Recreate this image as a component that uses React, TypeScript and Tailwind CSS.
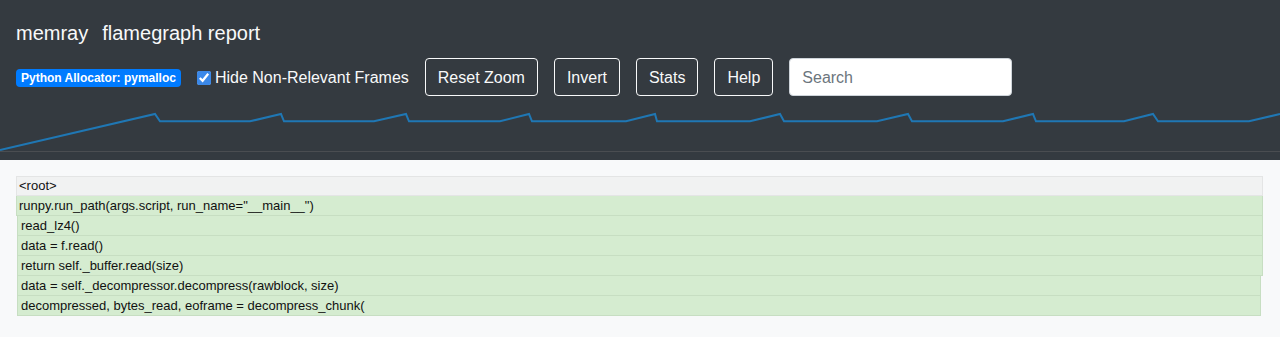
import React from 'react';

const font = { fontFamily: '"Liberation Sans", Arial, sans-serif' };

const frames = [
  { label: '<root>', cls: 'ml-0 w-[1247px] pl-[2px] bg-[#f1f2f2] border border-[#e4e5e5]' },
  { label: 'runpy.run_path(args.script, run_name="__main__")', cls: 'ml-0 w-[1247px] pl-[2px] bg-[#d5ecd0] border-x border-b border-[#c7dec2]' },
  { label: 'read_lz4()', cls: 'ml-[1px] w-[1246px] pl-[3px] bg-[#d5ecd0] border-x border-b border-[#c7dec2]' },
  { label: 'data = f.read()', cls: 'ml-[1px] w-[1246px] pl-[3px] bg-[#d5ecd0] border-x border-b border-[#c7dec2]' },
  { label: 'return self._buffer.read(size)', cls: 'ml-[1px] w-[1246px] pl-[3px] bg-[#d5ecd0] border-x border-b border-[#c7dec2]' },
  { label: 'data = self._decompressor.decompress(rawblock, size)', cls: 'ml-[1px] w-[1244px] pl-[3px] bg-[#d5ecd0] border-x border-b border-[#c7dec2]' },
  { label: 'decompressed, bytes_read, eoframe = decompress_chunk(', cls: 'ml-[1px] w-[1244px] pl-[3px] bg-[#d5ecd0] border-x border-b border-[#c7dec2]' },
];

const buttons = ['Reset Zoom', 'Invert', 'Stats', 'Help'];

const points =
  '0,54 155,18 160,25.3 250,25.3 281,18 284,25.3 374,25.3 406,18 409,25.3 500,25.3 529,18 532,25.3 626,25.3 655,18 657,25.3 750,25.3 780,18 784,25.3 877,25.3 908,18 912,25.3 1003,25.3 1033,18 1036,25.3 1124,25.3 1153,18 1158,25.3 1249,25.3 1280,18';

export default function App() {
  return (
    <div className="w-[1280px] h-[337px] bg-[#f8f9fa] overflow-hidden" style={font}>
      <header className="bg-[#343a40] h-[160px] flex flex-col">
        <div className="px-4 pt-[18px]">
          <div className="h-[30px] flex items-center text-[20px] text-[#f8f9fa]">
            <span>memray</span>
            <span className="ml-[14px]">flamegraph report</span>
          </div>
          <div className="mt-[10px] flex items-center gap-4 h-[38px]">
            <span className="mt-[2px] bg-[#007bff] text-white text-[12px] font-bold leading-none px-[5px] py-[3px] rounded-[4px]">
              Python Allocator: pymalloc
            </span>
            <label className="mt-[2px] flex items-center gap-[4px] text-[16px] text-[#f8f9fa]">
              <input type="checkbox" defaultChecked className="w-[14px] h-[14px] m-0 accent-[#3b88e8]" />
              Hide Non-Relevant Frames
            </label>
            {buttons.map(b => (
              <button
                key={b}
                className="h-[38px] px-[12px] pt-[2px] border border-[#f8f9fa] rounded-[4px] text-[16px] text-[#f8f9fa] bg-transparent"
              >
                {b}
              </button>
            ))}
            <input
              placeholder="Search"
              className="w-[223px] h-[38px] px-[12px] pt-[2px] rounded-[4px] bg-white border border-[#ced4da] text-[16px] placeholder:text-[#6c757d] outline-none"
            />
          </div>
        </div>
        <svg width="1280" height="64" className="block">
          <line x1="0" y1="55.5" x2="1280" y2="55.5" stroke="#4a4d51" strokeWidth="1" />
          <polyline points={points} fill="none" stroke="#1f77b4" strokeWidth="2" />
        </svg>
      </header>
      <main className="px-4 pt-4 flex flex-col">
        {frames.map(f => (
          <div
            key={f.label}
            className={`h-[20px] box-border flex items-center text-[13px] text-[#111] whitespace-nowrap overflow-hidden ${f.cls}`}
          >
            {f.label}
          </div>
        ))}
      </main>
    </div>
  );
}
